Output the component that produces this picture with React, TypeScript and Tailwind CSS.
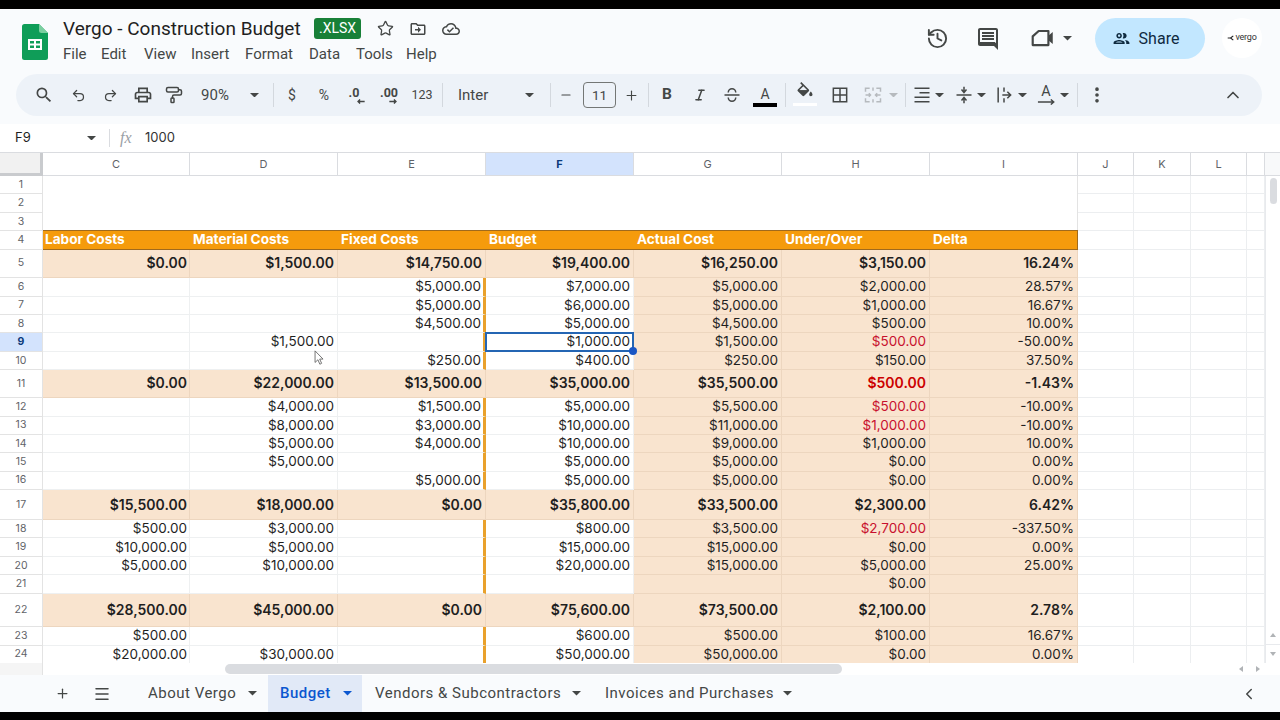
import React from "react";
import { Star, History, Undo2, Redo2, PaintRoller, ChevronUp, ChevronLeft, Plus, Minus, Menu, Italic, MoreVertical } from "lucide-react";

const Caret = ({ c = "" }: { c?: string }) => (
  <svg viewBox="0 0 10 5" className={`w-[9px] h-[4.5px] shrink-0 ${c}`}><path d="M0 0h10L5 5z" fill="currentColor" /></svg>
);
const M = ({ d, c = "", size = "w-5 h-5" }: { d: string; c?: string; size?: string }) => (
  <svg viewBox="0 0 24 24" className={`${size} shrink-0 ${c}`}><path d={d} fill="currentColor" /></svg>
);
const Sep = ({ c }: { c: string }) => <div className={`w-px h-[24px] bg-[#d3d8de] shrink-0 ${c}`} />;
const Box = ({ c, children }: { c: string; children: React.ReactNode }) => (
  <div className={`h-5 shrink-0 flex items-center justify-center ${c}`}>{children}</div>
);

const Stroke = ({ children, c = "" }: { children: React.ReactNode; c?: string }) => (
  <svg viewBox="0 0 24 24" fill="none" stroke="currentColor" strokeWidth="1.8" className={`w-5 h-5 shrink-0 ${c}`}>{children}</svg>
);

const P = {
  search: "M15.5 14h-.79l-.28-.27A6.471 6.471 0 0 0 16 9.5 6.5 6.5 0 1 0 9.5 16c1.61 0 3.09-.59 4.23-1.57l.27.28v.79l5 4.99L20.49 19l-4.99-5zm-6 0C7.01 14 5 11.99 5 9.5S7.01 5 9.5 5 14 7.01 14 9.5 11.99 14 9.5 14z",
  print: "M19 8h-1V3H6v5H5c-1.66 0-3 1.34-3 3v6h4v4h12v-4h4v-6c0-1.66-1.34-3-3-3zM8 5h8v3H8V5zm8 12v2H8v-4h8v2zm2-2v-2H6v2H4v-4c0-.55.45-1 1-1h14c.55 0 1 .45 1 1v4h-2z",
  fill: "M16.56 8.94 7.62 0 6.21 1.41l2.38 2.38-5.15 5.15a1.49 1.49 0 0 0 0 2.12l5.5 5.5c.29.29.68.44 1.06.44s.77-.15 1.06-.44l5.5-5.5c.59-.58.59-1.53 0-2.12zM5.21 10 10 5.21 14.79 10H5.21zM19 11.5s-2 2.17-2 3.5c0 1.1.9 2 2 2s2-.9 2-2c0-1.33-2-3.5-2-3.5z",
  comment: "M20 2H4c-1.1 0-2 .9-2 2v14c0 1.1.9 2 2 2h14l4 4V4c0-1.1-.9-2-2-2zm0 15.17L18.83 16H4V4h16v13.17zM6 12h12v2H6zm0-3h12v2H6zm0-3h12v2H6z",
  group: "M9 13.75c-2.34 0-7 1.17-7 3.5V19h14v-1.75c0-2.33-4.66-3.5-7-3.5zM4.34 17c.84-.58 2.87-1.25 4.66-1.25s3.82.67 4.66 1.25H4.34zM9 12c1.93 0 3.5-1.57 3.5-3.5S10.93 5 9 5 5.5 6.57 5.5 8.5 7.07 12 9 12zm0-5c.83 0 1.5.67 1.5 1.5S9.83 10 9 10s-1.5-.67-1.5-1.5S8.17 7 9 7zm7.04 6.81c1.16.84 1.96 1.96 1.96 3.44V19h4v-1.75c0-2.02-3.5-3.17-5.96-3.44zM15 12c1.93 0 3.5-1.57 3.5-3.5S16.93 5 15 5c-.54 0-1.04.13-1.5.35.63.89 1 1.98 1 3.15s-.37 2.26-1 3.15c.46.22.96.35 1.5.35z",
  folder: "M20 6h-8l-2-2H4c-1.1 0-2 .9-2 2v12c0 1.1.9 2 2 2h16c1.1 0 2-.9 2-2V8c0-1.1-.9-2-2-2zm0 12H4V6h5.17l2 2H20v10zm-8-4H8v-2h4V9l4 4-4 4v-3z",
  cloud: "M19.35 10.04C18.67 6.59 15.64 4 12 4 9.11 4 6.6 5.64 5.35 8.04 2.34 8.36 0 10.91 0 14c0 3.31 2.69 6 6 6h13c2.76 0 5-2.24 5-5 0-2.64-2.05-4.78-4.65-4.96zM19 18H6c-2.21 0-4-1.79-4-4 0-2.05 1.53-3.76 3.56-3.97l1.07-.11.5-.95C8.08 7.14 9.94 6 12 6c2.62 0 4.88 1.86 5.39 4.43l.3 1.5 1.53.11c1.56.1 2.78 1.41 2.78 2.96 0 1.65-1.35 3-3 3zm-9-3.82-2.09-2.09L6.5 13.5 10 17l6.01-6.01-1.41-1.41z",
};

type Row = { n: number; h: string; kind: "blank" | "head" | "total" | "plain"; v?: (string | null)[]; red?: number[] };
const N = "h-[18.4px]";
const rows: Row[] = [
  { n: 1, h: N, kind: "blank" },
  { n: 2, h: N, kind: "blank" },
  { n: 3, h: N, kind: "blank" },
  { n: 4, h: N, kind: "head", v: ["Labor Costs", "Material Costs", "Fixed Costs", "Budget", "Actual Cost", "Under/Over", "Delta"] },
  { n: 5, h: "h-[28.6px]", kind: "total", v: ["$0.00", "$1,500.00", "$14,750.00", "$19,400.00", "$16,250.00", "$3,150.00", "16.24%"] },
  { n: 6, h: N, kind: "plain", v: [null, null, "$5,000.00", "$7,000.00", "$5,000.00", "$2,000.00", "28.57%"] },
  { n: 7, h: N, kind: "plain", v: [null, null, "$5,000.00", "$6,000.00", "$5,000.00", "$1,000.00", "16.67%"] },
  { n: 8, h: N, kind: "plain", v: [null, null, "$4,500.00", "$5,000.00", "$4,500.00", "$500.00", "10.00%"] },
  { n: 9, h: N, kind: "plain", v: [null, "$1,500.00", null, "$1,000.00", "$1,500.00", "$500.00", "-50.00%"], red: [5] },
  { n: 10, h: N, kind: "plain", v: [null, null, "$250.00", "$400.00", "$250.00", "$150.00", "37.50%"] },
  { n: 11, h: "h-[28px]", kind: "total", v: ["$0.00", "$22,000.00", "$13,500.00", "$35,000.00", "$35,500.00", "$500.00", "-1.43%"], red: [5] },
  { n: 12, h: N, kind: "plain", v: [null, "$4,000.00", "$1,500.00", "$5,000.00", "$5,500.00", "$500.00", "-10.00%"], red: [5] },
  { n: 13, h: N, kind: "plain", v: [null, "$8,000.00", "$3,000.00", "$10,000.00", "$11,000.00", "$1,000.00", "-10.00%"], red: [5] },
  { n: 14, h: N, kind: "plain", v: [null, "$5,000.00", "$4,000.00", "$10,000.00", "$9,000.00", "$1,000.00", "10.00%"] },
  { n: 15, h: N, kind: "plain", v: [null, "$5,000.00", null, "$5,000.00", "$5,000.00", "$0.00", "0.00%"] },
  { n: 16, h: N, kind: "plain", v: [null, null, "$5,000.00", "$5,000.00", "$5,000.00", "$0.00", "0.00%"] },
  { n: 17, h: "h-[30px]", kind: "total", v: ["$15,500.00", "$18,000.00", "$0.00", "$35,800.00", "$33,500.00", "$2,300.00", "6.42%"] },
  { n: 18, h: N, kind: "plain", v: ["$500.00", "$3,000.00", null, "$800.00", "$3,500.00", "$2,700.00", "-337.50%"], red: [5] },
  { n: 19, h: N, kind: "plain", v: ["$10,000.00", "$5,000.00", null, "$15,000.00", "$15,000.00", "$0.00", "0.00%"] },
  { n: 20, h: N, kind: "plain", v: ["$5,000.00", "$10,000.00", null, "$20,000.00", "$15,000.00", "$5,000.00", "25.00%"] },
  { n: 21, h: N, kind: "plain", v: [null, null, null, null, null, "$0.00", null] },
  { n: 22, h: "h-[33.5px]", kind: "total", v: ["$28,500.00", "$45,000.00", "$0.00", "$75,600.00", "$73,500.00", "$2,100.00", "2.78%"] },
  { n: 23, h: N, kind: "plain", v: ["$500.00", null, null, "$600.00", "$500.00", "$100.00", "16.67%"] },
  { n: 24, h: N, kind: "plain", v: ["$20,000.00", "$30,000.00", null, "$50,000.00", "$50,000.00", "$0.00", "0.00%"] },
];
const colW = ["w-[147px]", "w-[148px]", "w-[148px]", "w-[148px]", "w-[148px]", "w-[148px]", "w-[148px]"];
const extra = ["w-[56px]", "w-[57px]", "w-[56px]", "w-[18px]"];
const colHead: [string, string][] = [["C", "w-[147px]"], ["D", "w-[148px]"], ["E", "w-[148px]"], ["F", "w-[148px]"], ["G", "w-[148px]"], ["H", "w-[148px]"], ["I", "w-[148px]"], ["J", "w-[56px]"], ["K", "w-[57px]"], ["L", "w-[56px]"], ["", "w-[18px]"]];

function GridRow({ r }: { r: Row }) {
  const sel = r.n === 9;
  return (
    <div className={`flex ${r.h} shrink-0 overflow-visible`}>
      <div className={`w-[43px] shrink-0 flex items-center justify-center text-[10.5px] border-b border-r border-[#e3e3e3] ${sel ? "bg-[#d3e3fd] text-[#0b3a7a] font-bold" : "bg-white text-[#5f6368]"}`}>{r.n}</div>
      {colW.map((w, i) => {
        const val = r.v?.[i] ?? null;
        const isRed = r.red?.includes(i);
        if (r.kind === "blank") return <div key={i} className={`${w} shrink-0 ${i === 6 ? "border-r border-[#e3e3e3]" : ""} bg-white`} />;
        if (r.kind === "head")
          return (
            <div key={i} className={`${w} shrink-0 bg-[#f59b0c] border-y border-[#a06a1c] ${i === 6 ? "border-r" : ""} ${i === 0 ? "pl-[2px]" : "pl-[3px]"} pb-[1px] -mt-px flex items-center text-white font-bold text-[13.6px] whitespace-nowrap`}>{val}</div>
          );
        const peach = r.kind === "total" || i >= 4;
        const rule = r.kind === "plain" && i === 2;
        const isSel = sel && i === 3;
        return (
          <div
            key={i}
            className={`${w} shrink-0 flex items-center justify-end whitespace-nowrap ${r.n === 11 ? "pb-[3px]" : "pb-px"} ${peach ? "bg-[#f9e4cf] border-b border-r border-[#edd6bf]" : "bg-white border-b border-r border-[#eef0f1]"} ${rule ? "border-r-[3px] border-r-[#e9a12c] pr-[2px]" : i === 0 ? "pr-[2px]" : "pr-[3px]"} ${r.kind === "total" ? "font-semibold text-[14px]" : "text-[13.5px]"} ${isRed ? (r.kind === "total" ? "text-[#cc0000]" : "text-[#c8102e]") : "text-[#1f1f1f]"} ${isSel ? "relative" : ""}`}
          >
            {val}
            {isSel && (
              <div className="absolute -left-px -top-px -right-px -bottom-px border-2 border-[#2465b3]">
                <div className="absolute -right-[5px] -bottom-[5px] w-2 h-2 rounded-full bg-[#1a56c4]" />
              </div>
            )}
          </div>
        );
      })}
      {extra.map((w, i) => (
        <div key={i} className={`${w} shrink-0 bg-white border-b border-r border-[#eceef0]`} />
      ))}
    </div>
  );
}

export default function App() {
  return (
    <div className="w-[1280px] h-[720px] bg-black overflow-hidden flex flex-col font-['Inter',sans-serif] text-[#1f1f1f]">
      <div className="h-[9px] shrink-0 bg-black" />
      {/* header */}
      <div className="h-[115px] shrink-0 bg-[#f9fbfd] flex flex-col">
        <div className="h-[65px] shrink-0 flex">
          <svg viewBox="0 0 26 36" className="w-[26px] h-[36px] ml-[22px] mt-[15px] shrink-0">
            <path d="M2.5 0H17l9 9v24.5a2.5 2.5 0 0 1-2.5 2.5h-21A2.5 2.5 0 0 1 0 33.5v-31A2.5 2.5 0 0 1 2.5 0z" fill="#0f9d58" />
            <path d="M17 0l9 9h-6.5A2.5 2.5 0 0 1 17 6.5z" fill="#7bcfa0" />
            <path d="M6 15h14v11H6zm2 2v2.6h4V17zm6 0v2.6h4V17zm-6 4.4V24h4v-2.6zm6 0V24h4v-2.6z" fill="#fff" fillRule="evenodd" />
          </svg>
          <div className="ml-[15px] flex flex-col font-['Roboto',sans-serif]">
            <div className="flex items-center h-[21px] mt-[9px]">
              <span className="text-[19px] pt-[1px] text-[#1f1f1f] whitespace-nowrap w-[251px]">Vergo - Construction Budget</span>
              <span className="w-[47px] h-[21px] rounded-[3px] bg-[#188038] text-white text-[14px] flex items-center justify-center">.XLSX</span>
              <Star className="w-[17px] h-[17px] ml-[16px] text-[#444746]" strokeWidth={1.8} />
              <M d={P.folder} c="ml-[15px] text-[#444746]" size="w-[18px] h-[18px]" />
              <M d={P.cloud} c="ml-[15px] text-[#444746]" size="w-[18px] h-[18px]" />
            </div>
            <div className="flex items-center mt-[3px] h-[24px] text-[15px] text-[#444746]">
              <span className="w-[38px]">File</span>
              <span className="w-[43px]">Edit</span>
              <span className="w-[47px]">View</span>
              <span className="w-[54px]">Insert</span>
              <span className="w-[64px]">Format</span>
              <span className="w-[47px]">Data</span>
              <span className="w-[50px]">Tools</span>
              <span>Help</span>
            </div>
          </div>
          <div className="ml-auto flex items-start text-[#444746] font-['Roboto',sans-serif]">
            <History className="w-[23px] h-[23px] mt-[18px]" strokeWidth={2} />
            <M d={P.comment} c="ml-[27px] mt-[17px]" size="w-[24px] h-[24px]" />
            <svg viewBox="0 0 24 24" className="w-[26px] h-[26px] ml-[30px] mt-[16px] shrink-0">
              <path d="M8 5.5h9v13H2.5v-8z" fill="none" stroke="currentColor" strokeWidth="2" strokeLinejoin="round" />
              <path d="M17 10l4-3.5v11L17 14z" fill="currentColor" />
            </svg>
            <Caret c="ml-[7px] mt-[27px]" />
            <div className="ml-[23px] mt-[9px] w-[110px] h-[41px] rounded-full bg-[#c2e7ff] flex items-center justify-center gap-[8px] pr-[9px] text-[#0f2a3f] text-[16px]">
              <M d={P.group} size="w-[19px] h-[19px]" />
              <span>Share</span>
            </div>
            <div className="ml-[17px] mr-[18px] mt-[9px] w-[40px] h-[40px] rounded-full bg-white flex items-center justify-center gap-[1px]">
              <svg viewBox="0 0 10 8" className="w-[7px] h-[6px]"><path d="M9 1 5 4l4 3M1 4h4" fill="none" stroke="#222" strokeWidth="1.6" /></svg>
              <span className="text-[9px] text-[#333] tracking-tight">vergo</span>
            </div>
          </div>
        </div>
        {/* toolbar */}
        <div className="ml-[16px] w-[1246px] h-[42px] rounded-full bg-[#edf2f8] flex items-center pl-[18px] pr-[19px] text-[#444746] text-[14px] font-['Roboto',sans-serif]">
          <M d={P.search} />
          <Box c="w-5 ml-[14px]"><Undo2 className="w-[15px] h-[15px]" strokeWidth={2} /></Box>
          <Box c="w-5 ml-[12px]"><Redo2 className="w-[15px] h-[15px]" strokeWidth={2} /></Box>
          <M d={P.print} c="ml-[13px]" />
          <Box c="w-5 ml-[11px]"><PaintRoller className="w-[18px] h-[18px]" strokeWidth={2} /></Box>
          <Box c="w-[32px] ml-[15px]"><span className="text-[15px] whitespace-nowrap">90%</span></Box>
          <Caret c="ml-[19px]" />
          <Sep c="ml-[14px]" />
          <Box c="w-5 ml-[8px]"><span className="text-[14px]">$</span></Box>
          <Box c="w-5 ml-[12px]"><span className="text-[14px]">%</span></Box>
          <Box c="w-6 ml-[10px] flex-col">
            <span className="text-[12.5px] font-bold leading-[12px] -ml-[4px]">.0</span>
            <svg viewBox="0 0 10 6" className="w-[9px] h-[5px] ml-[8px]"><path d="M10 3H2M4.5 .5 2 3l2.5 2.5" fill="none" stroke="currentColor" strokeWidth="1.6" /></svg>
          </Box>
          <Box c="w-7 ml-[7px] flex-col">
            <span className="text-[12.5px] font-bold leading-[12px]">.00</span>
            <svg viewBox="0 0 10 6" className="w-[9px] h-[5px] ml-[8px]"><path d="M0 3h8M5.5 .5 8 3 5.5 5.5" fill="none" stroke="currentColor" strokeWidth="1.6" /></svg>
          </Box>
          <Box c="w-6 ml-[7px]"><span className="text-[12.5px]">123</span></Box>
          <Sep c="ml-[8px]" />
          <Box c="w-[60px] ml-[15px] justify-start"><span className="text-[15px]">Inter</span></Box>
          <Caret c="ml-[7px]" />
          <Sep c="ml-[16px]" />
          <Box c="w-5 ml-[5px]"><Minus className="w-[14px] h-[14px]" strokeWidth={1.8} /></Box>
          <div className="w-[33px] h-[26px] ml-[7px] shrink-0 rounded-[4px] border border-[#747775] flex items-center justify-center text-[13.5px]">11</div>
          <Box c="w-5 ml-[5px]"><Plus className="w-[15px] h-[15px]" strokeWidth={1.8} /></Box>
          <Sep c="ml-[7px]" />
          <Box c="w-5 ml-[8px]"><span className="text-[15.5px] font-bold">B</span></Box>
          <Box c="w-5 ml-[13px]"><Italic className="w-[14px] h-[14px]" strokeWidth={2.6} /></Box>
          <Stroke c="ml-[12px]">
            <path d="M3 12h18M7.5 9a4.5 4.5 0 0 1 9 0M7.5 15a4.5 4.5 0 0 0 9 0" />
          </Stroke>
          <div className="w-[24px] ml-[11px] h-[24px] shrink-0 flex flex-col items-center justify-end">
            <span className="text-[14px] leading-[16px]">A</span>
            <div className="w-[24px] h-[4px] mt-[1px] bg-black" />
          </div>
          <Sep c="ml-[8px]" />
          <div className="w-[24px] ml-[7px] h-[26px] shrink-0 flex flex-col items-center">
            <svg viewBox="0 0 24 24" className="w-5 h-5 text-[#444746]">
              <path d={P.fill} fill="currentColor" />
              <path d="M4 10h12l-6 6z" fill="currentColor" />
            </svg>
            <div className="w-[24px] h-[3px] mt-[1px] bg-white" />
          </div>
          <Stroke c="ml-[13px]"><path d="M4 4h16v16H4zM12 4v16M4 12h16" /></Stroke>
          <svg viewBox="0 0 24 24" fill="none" stroke="#b6babe" strokeWidth="1.8" className="w-5 h-5 ml-[13px] shrink-0">
            <path d="M3 8V4h5M3 16v4h5M21 8V4h-5M21 16v4h-5M12 3v4M12 17v4M3 12h6M7 10l2 2-2 2M21 12h-6M17 10l-2 2 2 2" />
          </svg>
          <Caret c="ml-[6px] text-[#b6babe]" />
          <Sep c="ml-[7px]" />
          <Stroke c="ml-[6px]"><path d="M3 4h18M9 9.3h12M3 14.6h18M3 20h18" /></Stroke>
          <Caret c="ml-[3px]" />
          <Stroke c="ml-[10px]"><path d="M3 12h18" /><path d="M12 2v6M9 5.5 12 9l3-3.5M12 22v-6M9 18.5 12 15l3 3.5" /></Stroke>
          <Caret c="ml-[3px]" />
          <Stroke c="ml-[8px]"><path d="M5 3v18M12 3v5M12 16v5M10 12h10M16 8l4 4-4 4" /></Stroke>
          <Caret c="ml-[4px]" />
          <div className="w-5 h-6 ml-[9px] shrink-0 flex flex-col items-center">
            <span className="text-[14.5px] leading-[17px]">A</span>
            <svg viewBox="0 0 20 7" className="w-[19px] h-[6px] -mt-[1px]"><path d="M0 3.5h18M15 .5l3.5 3-3.5 3" fill="none" stroke="currentColor" strokeWidth="1.6" /></svg>
          </div>
          <Caret c="ml-[4px]" />
          <Sep c="ml-[8px]" />
          <Box c="w-5 ml-[9px]"><MoreVertical className="w-5 h-5" strokeWidth={2.4} /></Box>
          <ChevronUp className="w-5 h-5 ml-auto shrink-0" strokeWidth={2} />
        </div>
        <div className="h-[8px] shrink-0" />
      </div>
      {/* formula bar */}
      <div className="h-[28px] shrink-0 bg-white flex items-center text-[13px] text-[#444746]">
        <span className="ml-[15px] w-[72px] text-[#1f1f1f]">F9</span>
        <Caret />
        <div className="ml-[13px] w-px h-[18px] bg-[#dadce0]" />
        <span className="ml-[10px] w-[25px] font-['Liberation_Serif',serif] italic text-[16px] text-[#9aa0a6]">fx</span>
        <span className="text-[13px] text-[#333]">1000</span>
      </div>
      {/* grid */}
      <div className="relative h-[523px] shrink-0 bg-white flex flex-col border-t border-[#dadce0] overflow-hidden">
        <div className="flex h-[23px] shrink-0 text-[11px] text-[#5f6368]">
          <div className="w-[43px] shrink-0 bg-[#f1f1f1] border-r-[3px] border-b-[3px] border-[#c9cbce]" />
          {colHead.map(([l, w]) => (
            <div key={l} className={`${w} shrink-0 flex items-center justify-center border-r border-b border-[#dadce0] ${l === "F" ? "bg-[#d3e3fd] text-[#0b3a7a] font-bold" : "bg-white"}`}>{l}</div>
          ))}
          <div className="flex-1 bg-[#f8f9fa] border-b border-[#dadce0]" />
        </div>
        <div className="flex flex-1 min-h-0">
          <div className="w-[1265px] shrink-0 flex flex-col overflow-hidden">
            <div className="h-[487px] shrink-0 overflow-hidden flex flex-col">
              {rows.map((r) => (
                <GridRow key={r.n} r={r} />
              ))}
            </div>
          </div>
          <div className="flex-1 bg-white border-l border-[#e8eaed] flex flex-col items-center text-[#b0b3b6]">
            <div className="mt-[2px] w-[7px] h-[26px] rounded-full bg-[#dadce0]" />
            <svg viewBox="0 0 6 4" className="w-[6px] h-[4px] mt-auto"><path d="M0 4h6L3 0z" fill="currentColor" /></svg>
            <div className="w-full h-px bg-[#e8eaed] mt-[7px]" />
            <svg viewBox="0 0 6 4" className="w-[6px] h-[4px] mt-[7px] mb-[19px]"><path d="M0 0h6L3 4z" fill="currentColor" /></svg>
          </div>
        </div>
        {/* horizontal scrollbar */}
        <div className="absolute left-0 right-0 bottom-0 h-[12px] bg-white flex items-center">
          <div className="w-[43px] h-full bg-[#f5f5f5] border-r border-[#e3e3e3]" />
          <div className="ml-[182px] w-[617px] h-[10px] rounded-full bg-[#dadce0]" />
          <svg viewBox="0 0 4 6" className="w-[4px] h-[6px] ml-[397px] text-[#b0b3b6]"><path d="M4 0v6L0 3z" fill="currentColor" /></svg>
          <svg viewBox="0 0 4 6" className="w-[4px] h-[6px] ml-[13px] text-[#b0b3b6]"><path d="M0 0v6l4-3z" fill="currentColor" /></svg>
        </div>
        {/* mouse pointer */}
        <svg viewBox="0 0 12 18" className="absolute left-[314px] top-[197px] w-[11px] h-[16px]">
          <path d="M1 1v13l3.2-3 2.2 5 2-1-2.2-4.8H10z" fill="#fff" stroke="#666" strokeWidth="1" />
        </svg>
      </div>
      {/* tabs */}
      <div className="h-[37px] shrink-0 bg-[#f9fbfd] flex items-center text-[#444746] text-[15px] font-['Roboto',sans-serif]">
        <Plus className="w-[15px] h-[15px] ml-[55px] shrink-0" strokeWidth={2} />
        <Menu className="w-[18px] h-[18px] ml-[23px] shrink-0" strokeWidth={2} />
        <span className="ml-[37px] w-[100px] tracking-[0.5px] whitespace-nowrap">About Vergo</span>
        <Caret />
        <div className="ml-[11px] w-[94px] h-full bg-[#e1e9f7] flex items-center text-[#0b57d0] font-medium">
          <span className="ml-[12px] w-[63px] tracking-[0.5px]">Budget</span>
          <Caret />
        </div>
        <span className="ml-[13px] w-[197px] tracking-[0.5px] whitespace-nowrap">Vendors &amp; Subcontractors</span>
        <Caret />
        <span className="ml-[24px] w-[178px] tracking-[0.5px] whitespace-nowrap">Invoices and Purchases</span>
        <Caret />
        <ChevronLeft className="w-[18px] h-[18px] ml-[448px] shrink-0" strokeWidth={2} />
      </div>
    </div>
  );
}
